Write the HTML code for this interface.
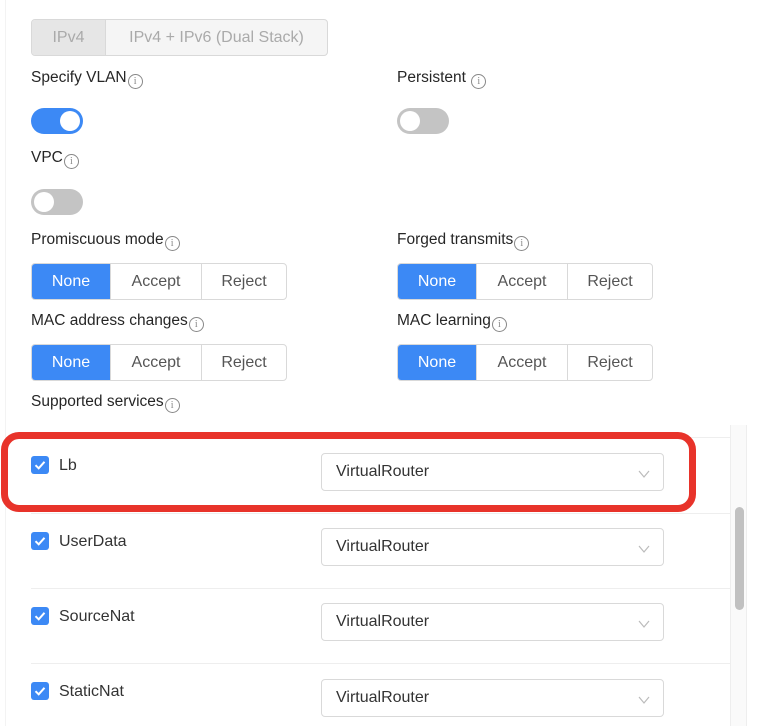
<!DOCTYPE html>
<html><head><style>
*{box-sizing:border-box}
body{margin:0;width:768px;height:726px;background:#fff;font-family:"Liberation Sans",Arial,sans-serif;color:#262626;position:relative;overflow:hidden}
.a{position:absolute}
.lbl{font-size:15.5px;line-height:18px}
.i{display:inline-block;width:15px;height:15px;border:1px solid #888;border-radius:50%;font-size:10px;line-height:13px;text-align:center;color:#888;vertical-align:-2px;margin-left:1px;font-family:"Liberation Serif",serif}
.tg{width:52px;height:26px;border-radius:13px}
.tg .k{position:absolute;top:3px;width:20px;height:20px;border-radius:50%;background:#fff}
.seg{display:flex;height:37px;border:1px solid #d9d9d9;border-radius:4px;overflow:hidden;font-size:16px}
.seg div{display:flex;align-items:center;justify-content:center;border-left:1px solid #d9d9d9;color:#555}
.seg div:first-child{border-left:none}
.seg .on{background:#3c89f5;color:#fff}
.cb{width:18px;height:18px;border-radius:3px;background:#3c89f5}
.sel{width:343px;height:38px;border:1px solid #d9d9d9;border-radius:4px;font-size:16px;padding:9px 14px;color:#333}
.sep{left:31px;width:699px;height:1px;background:#eee}
.svc{font-size:16px;color:#333}
</style></head><body>
<div class="a" style="left:5px;top:0;width:1px;height:726px;background:#f3f3f3"></div>
<div class="a seg" style="left:31px;top:19px;width:297px;background:#f5f5f5;color:#aaa">
<div style="width:73px;background:#e6e6e6;color:#aaa">IPv4</div><div style="flex:1;color:#aaa">IPv4 + IPv6 (Dual Stack)</div></div>
<div class="a lbl" style="left:31px;top:69px">Specify VLAN<span class="i">i</span></div>
<div class="a lbl" style="left:397px;top:69px">Persistent <span class="i">i</span></div>
<div class="a tg" style="left:31px;top:108px;background:#3c89f5"><div class="k" style="left:29px"></div></div>
<div class="a tg" style="left:397px;top:108px;background:#c4c4c4"><div class="k" style="left:3px"></div></div>
<div class="a lbl" style="left:31px;top:149px">VPC<span class="i">i</span></div>
<div class="a tg" style="left:31px;top:189px;background:#c4c4c4"><div class="k" style="left:3px"></div></div>
<div class="a lbl" style="left:31px;top:231px">Promiscuous mode<span class="i">i</span></div>
<div class="a lbl" style="left:397px;top:231px">Forged transmits<span class="i">i</span></div>
<div class="a seg" style="left:31px;top:263px;width:256px"><div class="on" style="width:78px">None</div><div style="width:91px">Accept</div><div style="flex:1">Reject</div></div>
<div class="a seg" style="left:397px;top:263px;width:256px"><div class="on" style="width:78px">None</div><div style="width:91px">Accept</div><div style="flex:1">Reject</div></div>
<div class="a lbl" style="left:31px;top:312px">MAC address changes<span class="i">i</span></div>
<div class="a lbl" style="left:397px;top:312px">MAC learning<span class="i">i</span></div>
<div class="a seg" style="left:31px;top:344px;width:256px"><div class="on" style="width:78px">None</div><div style="width:91px">Accept</div><div style="flex:1">Reject</div></div>
<div class="a seg" style="left:397px;top:344px;width:256px"><div class="on" style="width:78px">None</div><div style="width:91px">Accept</div><div style="flex:1">Reject</div></div>
<div class="a lbl" style="left:31px;top:393px">Supported services<span class="i">i</span></div>

<div class="a" style="left:730px;top:425px;width:17px;height:301px;background:#fafafa;border-left:1px solid #eee;border-right:1px solid #eee"></div>
<div class="a" style="left:735px;top:507px;width:9px;height:103px;border-radius:5px;background:#c1c1c1"></div>
<div class="a sep" style="top:437px"></div>
<div class="a sep" style="top:513px"></div>
<div class="a sep" style="top:588px"></div>
<div class="a sep" style="top:663px"></div>

<svg width="0" height="0" style="position:absolute"><defs><symbol id="ck" viewBox="0 0 18 18"><path d="M4.5 9.2 L7.7 12.3 L13.5 5.8" stroke="#fff" stroke-width="2" fill="none"/></symbol><symbol id="dn" viewBox="0 0 14 10"><path d="M2 2 L7 8 L12 2" stroke="#bbb" stroke-width="1.2" fill="none"/></symbol></defs></svg>

<div class="a cb" style="left:31px;top:456px"><svg width="18" height="18"><use href="#ck"/></svg></div>
<div class="a svc" style="left:59px;top:457px">Lb</div>
<div class="a sel" style="left:321px;top:453px">VirtualRouter<svg class="a" style="left:315px;top:15px" width="14" height="10"><use href="#dn"/></svg></div>

<div class="a cb" style="left:31px;top:532px"><svg width="18" height="18"><use href="#ck"/></svg></div>
<div class="a svc" style="left:59px;top:533px">UserData</div>
<div class="a sel" style="left:321px;top:528px">VirtualRouter<svg class="a" style="left:315px;top:15px" width="14" height="10"><use href="#dn"/></svg></div>

<div class="a cb" style="left:31px;top:607px"><svg width="18" height="18"><use href="#ck"/></svg></div>
<div class="a svc" style="left:59px;top:608px">SourceNat</div>
<div class="a sel" style="left:321px;top:603px">VirtualRouter<svg class="a" style="left:315px;top:15px" width="14" height="10"><use href="#dn"/></svg></div>

<div class="a cb" style="left:31px;top:682px"><svg width="18" height="18"><use href="#ck"/></svg></div>
<div class="a svc" style="left:59px;top:683px">StaticNat</div>
<div class="a sel" style="left:321px;top:679px">VirtualRouter<svg class="a" style="left:315px;top:15px" width="14" height="10"><use href="#dn"/></svg></div>

<div class="a" style="left:1px;top:432px;width:695px;height:80px;border:7px solid #e8332a;border-radius:18px"></div>
</body></html>
